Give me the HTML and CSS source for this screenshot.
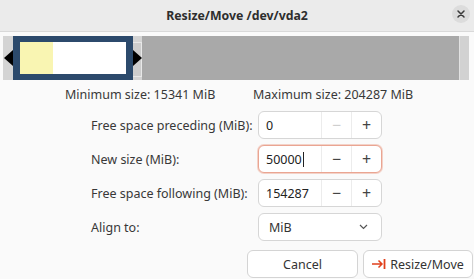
FILE: index.html
```html
<!DOCTYPE html>
<html>
<head>
<meta charset="utf-8">
<link rel="stylesheet" href="styles.css">
</head>
<body>
<div class="window">
  <div class="titlebar">
    <div class="title">Resize/Move /dev/vda2</div>
    <div class="close"><svg width="10" height="10" viewBox="0 0 10 10"><path d="M2 2L8 8M8 2L2 8" stroke="#3a3a3a" stroke-width="1.5" stroke-linecap="round"/></svg></div>
  </div>
  <div class="partbar">
    <div class="lead"></div>
    <div class="frame"><div class="used"></div><div class="unused"></div></div>
    <div class="gapbox"></div>
    <div class="free"><div class="freetail"></div></div>
    <svg class="arrow arrow-left" width="9" height="16" viewBox="0 0 9 16"><path d="M9 0L0 8L9 16Z" fill="#000"/></svg>
    <svg class="arrow arrow-right" width="9" height="16" viewBox="0 0 9 16"><path d="M0 0L9 8L0 16Z" fill="#000"/></svg>
  </div>
  <div class="sizes">
    <span class="min">Minimum size: 15341 MiB</span>
    <span class="max">Maximum size: 204287 MiB</span>
  </div>
  <div class="form">
    <div class="label">Free space preceding (MiB):</div>
    <div class="spin">
      <div class="entry">0</div>
      <div class="btn disabled">&minus;</div>
      <div class="btn">+</div>
    </div>
    <div class="label">New size (MiB):</div>
    <div class="spin focused">
      <div class="entry">50000<span class="caret"></span></div>
      <div class="btn">&minus;</div>
      <div class="btn">+</div>
    </div>
    <div class="label">Free space following (MiB):</div>
    <div class="spin">
      <div class="entry">154287</div>
      <div class="btn">&minus;</div>
      <div class="btn">+</div>
    </div>
    <div class="label">Align to:</div>
    <div class="select">
      <span>MiB</span>
      <svg width="9" height="6" viewBox="0 0 9 6"><path d="M1 1L4.5 4.5L8 1" fill="none" stroke="#555" stroke-width="1.2"/></svg>
    </div>
  </div>
  <div class="actions">
    <div class="button cancel">Cancel</div>
    <div class="button apply"><svg width="14" height="10" viewBox="0 0 14 10"><path d="M0 5H10M6.5 1.5L10 5L6.5 8.5" fill="none" stroke="#e0401c" stroke-width="1.5"/><path d="M12.5 0V10" stroke="#e0401c" stroke-width="1.8"/></svg><span>Resize/Move</span></div>
  </div>
</div>
</body>
</html>
```
FILE: styles.css
```css
html, body {
  margin: 0;
  padding: 0;
  background: #fafafa;
}
.window {
  width: 474px;
  height: 279px;
  overflow: hidden;
  font-family: "Noto Sans", "Open Sans", sans-serif;
  font-size: 12.5px;
  color: #383838;
  background: #fafafa;
}
.titlebar {
  height: 31px;
  background: #ebebeb;
  border-bottom: 1px solid #d9d9d9;
  display: flex;
  align-items: center;
  justify-content: center;
  position: relative;
}
.title {
  font-weight: bold;
  font-size: 12.3px;
  color: #2e2e2e;
}
.close {
  position: absolute;
  right: 4px;
  top: 5px;
  width: 18px;
  height: 18px;
  border-radius: 50%;
  background: #dcdcdc;
  display: flex;
  align-items: center;
  justify-content: center;
}
.partbar {
  position: relative;
  display: flex;
  height: 44px;
  margin: 4px 5px 0 3px;
  background: #d4d4d4;
}
.lead {
  width: 10px;
}
.frame {
  width: 120px;
  box-sizing: border-box;
  background: #2c4a6c;
  padding: 6px 7px;
  display: flex;
}
.used {
  width: 33px;
  background: #f9f5b2;
}
.unused {
  flex: 1;
  background: #ffffff;
}
.gapbox {
  width: 9px;
  box-sizing: border-box;
  margin: 6px 0 3px;
  border: 1px solid #e8e8e8;
  border-left: none;
  background: #cdcdcd;
}
.free {
  flex: 1;
  background: #a9a9a9;
  display: flex;
  justify-content: flex-end;
}
.freetail {
  width: 9px;
  background: #d2d2d2;
  border-left: 1px solid #e2e2e2;
}
.arrow {
  position: absolute;
  top: 14px;
}
.arrow-left {
  left: 1px;
}
.arrow-right {
  left: 130px;
}
.sizes {
  height: 22px;
  margin-top: 3px;
  display: flex;
  align-items: center;
}
.min {
  margin-left: 65px;
  width: 188px;
}
.form {
  display: grid;
  grid-template-columns: 167px 124px;
  grid-auto-rows: 28px;
  row-gap: 6px;
  margin-top: 6px;
  padding-left: 91px;
}
.label {
  display: flex;
  align-items: center;
}
.spin {
  display: flex;
  box-sizing: border-box;
  border: 1px solid #d6d6d6;
  border-radius: 6px;
  background: #ffffff;
}
.spin.focused {
  border-color: #eaa592;
  box-shadow: 0 0 0 1px #f3d2c8;
}
.entry {
  width: 64px;
  box-sizing: border-box;
  padding-left: 7px;
  display: flex;
  align-items: center;
  color: #222;
}
.caret {
  display: inline-block;
  width: 1px;
  height: 15px;
  background: #222;
  margin-left: 1px;
}
.btn {
  width: 30px;
  border-left: 1px solid #ececec;
  display: flex;
  align-items: center;
  justify-content: center;
  font-size: 16px;
  color: #444;
}
.btn.disabled {
  color: #cfcfcf;
}
.select {
  display: flex;
  align-items: center;
  justify-content: space-between;
  box-sizing: border-box;
  border: 1px solid #d6d6d6;
  border-radius: 6px;
  background: #ffffff;
  padding: 0 13px 0 10px;
  color: #333;
}
.actions {
  display: flex;
  gap: 5px;
  margin-top: 9px;
  padding-left: 247px;
}
.button {
  height: 28px;
  box-sizing: border-box;
  border: 1px solid #d4d4d4;
  border-radius: 6px;
  background: #ffffff;
  display: flex;
  align-items: center;
  justify-content: center;
  color: #333;
}
.cancel {
  width: 111px;
}
.apply {
  width: 110px;
  gap: 4px;
}
```
